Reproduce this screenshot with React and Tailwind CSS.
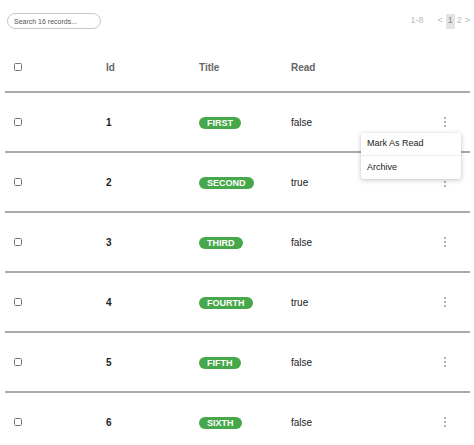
import React, { useState } from "react";

const records = [
  { id: 1, title: "First", read: false },
  { id: 2, title: "Second", read: true },
  { id: 3, title: "Third", read: false },
  { id: 4, title: "Fourth", read: true },
  { id: 5, title: "Fifth", read: false },
  { id: 6, title: "Sixth", read: false },
];

const Checkbox = () => (
  <input
    type="checkbox"
    className="w-[8px] h-[8px] appearance-none border border-[#777] rounded-[1.5px] bg-white"
  />
);

const Kebab = () => (
  <div className="flex flex-col items-center gap-[2px] w-[6px]">
    <span className="w-[2px] h-[2px] rounded-full bg-[#999]" />
    <span className="w-[2px] h-[2px] rounded-full bg-[#999]" />
    <span className="w-[2px] h-[2px] rounded-full bg-[#999]" />
  </div>
);

const App = () => {
  const [search, setSearch] = useState("");
  const [openMenu] = useState(1);

  return (
    <div
      className="w-[474px] h-[445px] bg-white overflow-hidden text-[#222]"
      style={{ fontFamily: '"Liberation Sans", Arial, sans-serif' }}
    >
      {/* Toolbar */}
      <div className="flex items-center justify-between pt-[13px] pl-[7px] pr-[4px]">
        <input
          value={search}
          onChange={(e) => setSearch(e.target.value)}
          placeholder="Search 16 records..."
          className="w-[94px] h-[16px] rounded-full border border-[#c8c8c8] px-[6px] text-[7px] placeholder:text-[#555] outline-none"
        />
        <div className="flex items-center text-[9px] text-[#bbb]">
          <span className="mr-[14px]">1-8</span>
          <span className="mr-[3px]">&lt;</span>
          <span className="bg-[#e4e4e4] text-[#888] px-[2px] h-[15px] flex items-center">1</span>
          <span className="ml-[2px]">2</span>
          <span className="ml-[3px]">&gt;</span>
        </div>
      </div>

      {/* Table */}
      <div className="relative mt-[14px] mr-[4px] ml-[5px]">
        <div className="grid grid-cols-[101px_93px_92px_1fr_28px] items-center h-[50px] border-b-2 border-[#aaa] text-[10px] font-bold text-[#666]">
          <div className="pl-[9px] flex items-center">
            <Checkbox />
          </div>
          <div>Id</div>
          <div>Title</div>
          <div>Read</div>
          <div />
        </div>

        {records.map((r) => (
          <div
            key={r.id}
            className="relative grid grid-cols-[101px_93px_92px_1fr_28px] items-center h-[60px] border-b-2 border-[#aaa] text-[10px]"
          >
            <div className="pl-[9px] flex items-center">
              <Checkbox />
            </div>
            <div className="font-bold">{r.id}</div>
            <div>
              <span className="inline-flex items-center h-[12px] px-[8px] rounded-full bg-[#46a84a] text-white text-[9px] font-bold uppercase">
                {r.title}
              </span>
            </div>
            <div>{r.read ? "true" : "false"}</div>
            <div className="flex">
              <Kebab />
            </div>

            {openMenu === r.id && (
              <div className="absolute z-10 left-[356px] top-[40px] w-[100px] bg-white rounded-[3px] shadow-[0_1px_5px_rgba(0,0,0,0.25)] text-[9px]">
                <div className="h-[23px] flex items-center px-[6px] border-b border-[#eee]">
                  Mark As Read
                </div>
                <div className="h-[23px] flex items-center px-[6px]">Archive</div>
              </div>
            )}
          </div>
        ))}
      </div>
    </div>
  );
};

export default App;
